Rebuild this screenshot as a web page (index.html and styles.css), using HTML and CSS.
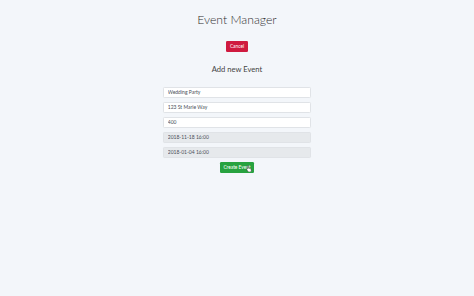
FILE: index.html
```html
<!DOCTYPE html>
<html lang="en">
<head>
<meta charset="utf-8">
<title>Event Manager</title>
<link rel="stylesheet" href="styles.css">
</head>
<body>
<main class="page">
  <h1 class="title">Event Manager</h1>
  <button class="btn btn-cancel" type="button">Cancel</button>
  <h2 class="subtitle">Add new Event</h2>
  <form class="form">
    <input class="field" type="text" value="Wedding Party">
    <input class="field" type="text" value="123 St Marie Way">
    <input class="field" type="text" value="400">
    <input class="field" type="text" value="2018-11-18 16:00" disabled>
    <input class="field" type="text" value="2018-01-04 16:00" disabled>
    <button class="btn btn-create" type="button">Create Event
      <svg class="cursor" viewBox="0 0 12 14" width="6" height="7" aria-hidden="true">
        <path d="M4 1.2c.7 0 1.2.5 1.2 1.2v4.2l.3-.1c.6-.3 1.3 0 1.6.5l.2.1c.6-.2 1.2 0 1.5.5.6-.2 1.3.1 1.5.7l.3 1.2v2.3c0 1.2-1 2.2-2.2 2.2H5.6c-.7 0-1.3-.3-1.7-.9L1.3 9.2c-.4-.5-.3-1.2.2-1.6.5-.3 1.1-.3 1.5.1l-.2-.2V2.4c0-.7.5-1.2 1.2-1.2z" fill="#fff" stroke="#222" stroke-width="1"/>
      </svg>
    </button>
  </form>
</main>
</body>
</html>
```
FILE: styles.css
```css
* { box-sizing: border-box; }
html, body { margin: 0; padding: 0; }
body {
  background: #f3f6fa;
  font-family: Lato, "Open Sans", "Liberation Sans", sans-serif;
  color: #3b3b3b;
  width: 474px;
  height: 296px;
  overflow: hidden;
}
.page {
  display: flex;
  flex-direction: column;
  align-items: center;
  padding-top: 13px;
}
.title {
  margin: 0;
  font-size: 12.2px;
  line-height: 14px;
  font-weight: 300;
  color: #2e2e2e;
}
.btn {
  border: none;
  border-radius: 1.3px;
  color: #fff;
  font-family: Lato, "Open Sans", "Liberation Sans", sans-serif;
  font-size: 4.8px;
  line-height: 11px;
  height: 11px;
  padding: 0;
  text-align: center;
}
.btn-cancel {
  margin-top: 13.7px;
  width: 22px;
  background: #cf1a3f;
}
.subtitle {
  margin: 12.2px 0 0;
  font-size: 7.6px;
  line-height: 10px;
  font-weight: 400;
  color: #444;
}
.form {
  margin-top: 12.8px;
  width: 148.5px;
  display: flex;
  flex-direction: column;
  align-items: center;
  gap: 4px;
}
.field {
  width: 100%;
  height: 11px;
  margin: 0;
  padding: 0 4px;
  border: 0.5px solid #e0e3e7;
  border-radius: 1.3px;
  background: #fff;
  font-family: Lato, "Open Sans", "Liberation Sans", sans-serif;
  font-size: 5px;
  color: #4a5058;
  outline: none;
}
.field:disabled {
  background: #e6e9ec;
  color: #4a5058;
  -webkit-text-fill-color: #4a5058;
  opacity: 1;
}
.btn-create {
  position: relative;
  margin-top: 0.6px;
  width: 34px;
  background: #27a23f;
}
.cursor {
  position: absolute;
  left: 26px;
  top: 2.5px;
}
```
